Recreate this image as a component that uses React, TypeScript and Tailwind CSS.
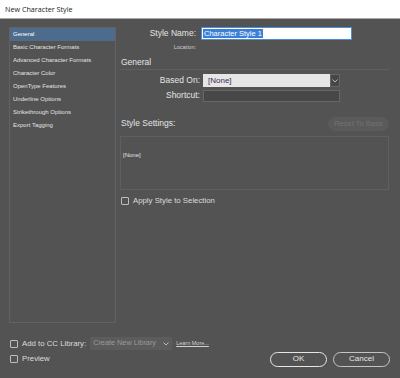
import React from "react";

const sections = [
  "General",
  "Basic Character Formats",
  "Advanced Character Formats",
  "Character Color",
  "OpenType Features",
  "Underline Options",
  "Strikethrough Options",
  "Export Tagging",
];

const Check = ({ label }: { label: string }) => (
  <div className="flex items-center gap-[4px]">
    <span className="w-[8px] h-[8px] border border-[#bdbdbd] rounded-[1px]" />
    <span className="text-[7.8px] text-[#dcdcdc]">{label}</span>
  </div>
);

const Chevron = () => (
  <svg width="6" height="4" viewBox="0 0 6 4" fill="none">
    <path d="M0.5 0.5 L3 3 L5.5 0.5" stroke="#b8b8b8" strokeWidth="1" />
  </svg>
);

export default function App() {
  return (
    <div
      className="w-[400px] h-[378px] bg-[#535353] flex flex-col overflow-hidden"
      style={{ fontFamily: '"Liberation Sans", Arial, sans-serif' }}
    >
      {/* title bar */}
      <div className="h-[19px] bg-white border-b border-[#a8a8a8] flex items-center px-[5px]">
        <span className="text-[7.2px] text-[#1a1a1a]" style={{ fontFamily: '"Open Sans", sans-serif' }}>
          New Character Style
        </span>
      </div>

      <div className="flex pt-[8px] px-[9px]">
        {/* sidebar */}
        <div className="w-[107px] h-[296px] border border-[#626262] flex flex-col">
          {sections.map((s, i) => (
            <div
              key={s}
              className={
                "h-[13px] flex items-center pl-[3px] text-[6px] " +
                (i === 0 ? "bg-[#4d6b8c] text-white" : "text-[#e2e2e2]")
              }
            >
              {s}
            </div>
          ))}
        </div>

        {/* main */}
        <div className="flex-1 ml-[4px] flex flex-col">
          <div className="flex items-center h-[13px]">
            <span className="w-[76px] text-right text-[8.5px] text-[#e4e4e4]">Style Name:</span>
            <div className="ml-[5px] w-[151px] h-[13px] bg-white border border-[#4a8ed8] flex items-center px-[1px]">
              <span className="bg-[#3c7fd6] text-white text-[7.5px] leading-[9px] px-[1px]">Character Style 1</span>
            </div>
          </div>
          <div className="h-[14px] flex items-center">
            <span className="w-[76px] text-right text-[5.5px] text-[#cfcfcf]">Location:</span>
          </div>
          <div className="h-[14px] flex items-center pl-[1px] mt-[1px]">
            <span className="text-[8.5px] text-[#e4e4e4]">General</span>
          </div>
          <div className="h-px bg-[#5f5f5f] mr-[2px] mb-[4px]" />
          <div className="flex items-center h-[13px]">
            <span className="w-[80px] text-right text-[8.5px] text-[#e4e4e4]">Based On:</span>
            <div className="ml-[3px] flex h-[13px]">
              <div className="w-[127px] bg-[#e6e6e6] flex items-center px-[5px] text-[8px] text-[#3d2c54]">[None]</div>
              <div className="w-[10px] bg-[#474747] border border-[#666] flex items-center justify-center">
                <Chevron />
              </div>
            </div>
          </div>
          <div className="flex items-center h-[13px] mt-[2px]">
            <span className="w-[80px] text-right text-[8.5px] text-[#e4e4e4]">Shortcut:</span>
            <div className="ml-[3px] w-[137px] h-[12px] bg-[#474747] border border-[#676767]" />
          </div>

          <div className="flex items-center justify-between mt-[14px] h-[15px] mr-[2px]">
            <span className="pl-[1px] text-[8.5px] text-[#e4e4e4]">Style Settings:</span>
            <span className="w-[61px] h-[14px] rounded-full bg-[#5a5a5a] flex items-center justify-center text-[7.5px] text-[#727272]">
              Reset To Base
            </span>
          </div>
          <div className="mt-[5px] h-[54px] mr-[2px] border border-[#5f5f5f] px-[2px] pt-[3px]">
            <span className="text-[6px] text-[#e0e0e0]">[None]</span>
          </div>
          <div className="mt-[5px] pl-[1px]">
            <Check label="Apply Style to Selection" />
          </div>
        </div>
      </div>

      {/* footer */}
      <div className="flex items-end justify-between pl-[10px] pr-[10px] mt-[14px]">
        <div className="flex flex-col gap-[3px]">
          <div className="flex items-center">
            <Check label="Add to CC Library:" />
            <div className="ml-[4px] w-[82px] h-[13px] bg-[#5c5c5c] flex items-center justify-between px-[3px]">
              <span className="text-[7.3px] text-[#9a9a9a]">Create New Library</span>
              <Chevron />
            </div>
            <span className="ml-[4px] text-[5.5px] text-[#d0d0d0] underline">Learn More...</span>
          </div>
          <Check label="Preview" />
        </div>
        <div className="flex gap-[6px] mb-[-2px]">
          <span className="w-[57px] h-[15px] rounded-full border-[1.5px] border-[#e6e6e6] flex items-center justify-center text-[8px] text-[#e6e6e6]">
            OK
          </span>
          <span className="w-[57px] h-[15px] rounded-full border border-[#c4c4c4] flex items-center justify-center text-[8px] text-[#e6e6e6]">
            Cancel
          </span>
        </div>
      </div>
    </div>
  );
}
